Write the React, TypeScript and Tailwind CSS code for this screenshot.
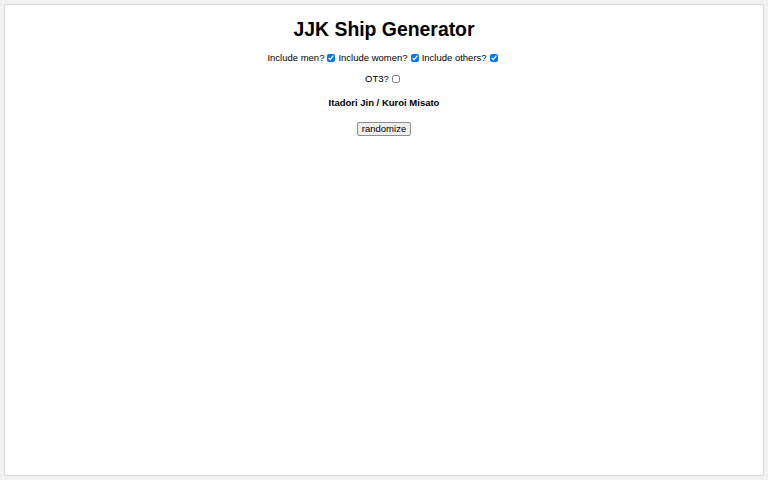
import { useState } from 'react'

export default function App() {
  const [men, setMen] = useState(true)
  const [women, setWomen] = useState(true)
  const [others, setOthers] = useState(true)
  const [ot3, setOt3] = useState(false)

  return (
    <div className="h-[480px] w-[768px] bg-[#f2f2f2] p-[4px] font-['Liberation_Sans',Arial,sans-serif] text-black">
      <div className="flex h-full flex-col items-center border border-[#dcdcdc] bg-white">
        <h1 className="mt-[12px] text-[19.4px] font-bold leading-[24px]">JJK Ship Generator</h1>
        <div className="mt-[11px] flex items-center text-[9.5px] leading-[12px]">
          <label className="flex items-center">
            Include men?
            <input type="checkbox" checked={men} onChange={() => setMen(!men)} className="mx-[3px] h-[8px] w-[8px] accent-[#0075ff]" />
          </label>
          <label className="flex items-center">
            Include women?
            <input type="checkbox" checked={women} onChange={() => setWomen(!women)} className="mx-[3px] h-[8px] w-[8px] accent-[#0075ff]" />
          </label>
          <label className="flex items-center">
            Include others?
            <input type="checkbox" checked={others} onChange={() => setOthers(!others)} className="mx-[3px] h-[8px] w-[8px] accent-[#0075ff]" />
          </label>
        </div>
        <label className="mt-[9px] flex items-center text-[9.5px] leading-[12px]">
          OT3?
          <input type="checkbox" checked={ot3} onChange={() => setOt3(!ot3)} className="mx-[3px] h-[8px] w-[8px]" />
        </label>
        <p className="mt-[12px] text-[9.5px] font-bold leading-[12px]">Itadori Jin / Kuroi Misato</p>
        <button className="mt-[13px] rounded-[2px] border border-[#8f8f8f] bg-[#efefef] px-[4px] text-[9.5px] leading-[12px]">
          randomize
        </button>
      </div>
    </div>
  )
}
